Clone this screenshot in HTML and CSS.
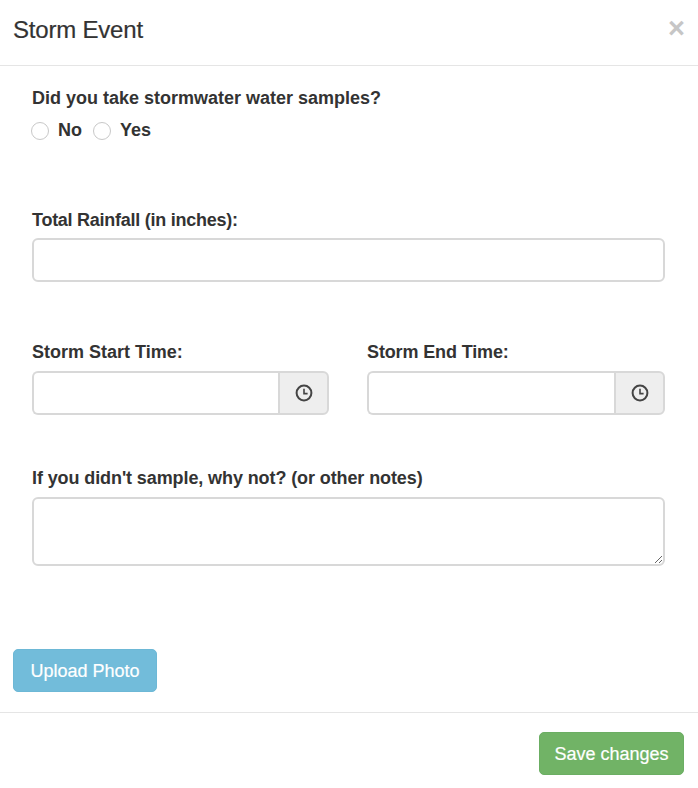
FILE: index.html
```html
<!DOCTYPE html>
<html lang="en">
<head>
    <meta charset="UTF-8">
    <meta name="viewport" content="width=device-width, initial-scale=1.0">
    <title>Storm Event</title>
    <link rel="stylesheet" href="styles.css">
</head>
<body>
    <div class="modal">
        <div class="modal-header">
            <h4 class="modal-title">Storm Event</h4>
            <button class="close" type="button">&times;</button>
        </div>

        <div class="modal-body">
            <div class="fields">
                <div class="group group-samples">
                    <div class="label">Did you take stormwater water samples?</div>
                    <div class="radios">
                        <label class="radio"><input type="radio" name="samples">No</label>
                        <label class="radio"><input type="radio" name="samples">Yes</label>
                    </div>
                </div>

                <div class="group group-rain">
                    <label class="label" for="rainfall">Total Rainfall (in inches):</label>
                    <input class="control" id="rainfall" type="text">
                </div>

                <div class="group group-times">
                    <div class="time-col time-start">
                        <label class="label" for="start-time">Storm Start Time:</label>
                        <div class="input-group">
                            <input class="control" id="start-time" type="text">
                            <span class="addon">
                                <svg width="18" height="18" viewBox="0 0 18 18" fill="none" stroke="#444" stroke-width="2">
                                    <circle cx="9" cy="9" r="7.4"/>
                                    <path d="M9 4.8V9.6H12.6" stroke-width="1.6"/>
                                </svg>
                            </span>
                        </div>
                    </div>
                    <div class="time-col time-end">
                        <label class="label" for="end-time">Storm End Time:</label>
                        <div class="input-group">
                            <input class="control" id="end-time" type="text">
                            <span class="addon">
                                <svg width="18" height="18" viewBox="0 0 18 18" fill="none" stroke="#444" stroke-width="2">
                                    <circle cx="9" cy="9" r="7.4"/>
                                    <path d="M9 4.8V9.6H12.6" stroke-width="1.6"/>
                                </svg>
                            </span>
                        </div>
                    </div>
                </div>

                <div class="group group-notes">
                    <label class="label" for="notes">If you didn't sample, why not? (or other notes)</label>
                    <textarea class="control notes" id="notes"></textarea>
                </div>
            </div>

            <button class="btn btn-info" type="button">Upload Photo</button>
        </div>

        <div class="modal-footer">
            <button class="btn btn-success" type="button">Save changes</button>
        </div>
    </div>
</body>
</html>
```

FILE: styles.css
```css
* {
    box-sizing: border-box;
}

body {
    margin: 0;
    background-color: #fff;
    font-family: "Liberation Sans", Arial, sans-serif;
    color: #333;
}

.modal {
    width: 698px;
    height: 788px;
    overflow: hidden;
}

.modal-header {
    display: flex;
    align-items: center;
    justify-content: space-between;
    height: 66px;
    padding: 0 13px 5px 13px;
    border-bottom: 1.5px solid #e5e5e5;
}

.modal-title {
    margin: 0;
    font-size: 24px;
    font-weight: 400;
    line-height: 30px;
    letter-spacing: -0.2px;
    -webkit-text-stroke: 0.2px #333;
}

.close {
    margin-bottom: 5px;
    padding: 0;
    border: none;
    background: none;
    font-family: inherit;
    font-size: 29px;
    font-weight: 700;
    line-height: 30px;
    color: #c6c6c6;
}

.modal-body {
    padding: 20px 13px 0;
}

.fields {
    padding: 0 20px 0 19px;
}

.label {
    display: block;
    font-size: 18px;
    font-weight: 700;
    line-height: 24px;
    color: #333;
}

.group-samples {
    height: 122px;
}

.radios {
    display: flex;
    gap: 12px;
    margin-top: 8px;
}

.radio {
    display: flex;
    align-items: center;
    gap: 9px;
    font-size: 18px;
    font-weight: 700;
    line-height: 24px;
}

.radio input {
    appearance: none;
    width: 18px;
    height: 18px;
    margin: 2px 0 0 -1px;
    border: 1.5px solid #c8c8c8;
    border-radius: 50%;
    background-color: #fff;
}

.group-rain {
    height: 132px;
}

.group-rain .label {
    margin-bottom: 6px;
    letter-spacing: -0.26px;
}

.time-col .label,
.group-notes .label {
    margin-bottom: 7px;
}

.time-end .label {
    letter-spacing: -0.13px;
}

.group-notes .label {
    letter-spacing: -0.1px;
}

.control {
    display: block;
    width: 100%;
    height: 44px;
    padding: 6px 12px;
    border: 2px solid #d8d8d8;
    border-radius: 6px;
    background-color: #fff;
    font-family: inherit;
    font-size: 18px;
    outline: none;
}

.group-times {
    display: flex;
    gap: 38px;
    height: 126px;
}

.time-start {
    flex: none;
    width: 297px;
}

.time-end {
    flex: 1;
}

.input-group {
    display: flex;
}

.input-group .control {
    flex: 1;
    min-width: 0;
    border-right: none;
    border-radius: 6px 0 0 6px;
}

.addon {
    display: flex;
    flex: none;
    align-items: center;
    justify-content: center;
    width: 51px;
    height: 44px;
    border: 2px solid #d8d8d8;
    border-radius: 0 6px 6px 0;
    background-color: #eee;
}

.notes {
    height: 69px;
    resize: vertical;
}

.group-notes {
    height: 183px;
}

.btn {
    padding: 0;
    border: 1px solid transparent;
    border-radius: 5px;
    font-family: inherit;
    font-size: 18px;
    line-height: 24px;
    color: #fff;
    -webkit-text-stroke: 0.2px #fff;
    cursor: pointer;
}

.btn-info {
    display: block;
    width: 144px;
    height: 43px;
    border-color: #6db8d6;
    background-color: #72bcda;
}

.modal-footer {
    display: flex;
    justify-content: flex-end;
    margin-top: 20px;
    padding: 19px 14px 0;
    border-top: 1.5px solid #e5e5e5;
}

.btn-success {
    width: 145px;
    height: 43px;
    border-color: #6bae63;
    background-color: #71b366;
}
```
